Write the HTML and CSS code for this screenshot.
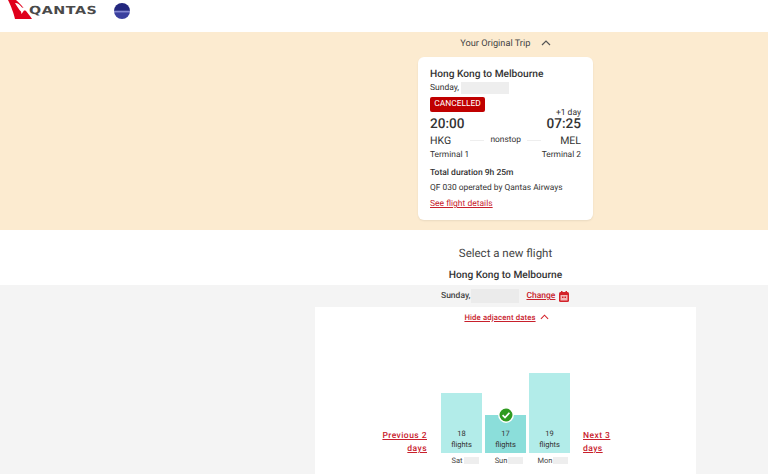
FILE: index.html
```html
<!DOCTYPE html>
<html lang="en">
<head>
    <meta charset="UTF-8">
    <meta name="viewport" content="width=device-width, initial-scale=1.0">
    <title>Select a new flight</title>
    <link rel="stylesheet" href="styles.css">
</head>
<body>
    <div class="header">
        <svg class="tail" width="24" height="19" viewBox="0 0 24 19">
            <path d="M0 0H8C12 3 20 13 24 19H7C6 14 3 6 0 0Z" fill="#e0001b"/>
            <path d="M7 3C10 3 12 5 14 7.5C16 7.5 18 8.5 20 10.5L16 10.5L13.5 14L13 11.5C11 10 9 6 7 3Z" fill="#fff"/>
        </svg>
        <span class="wordmark">QANTAS</span>
        <span class="globe"></span>
    </div>

    <div class="trip-band">
        <div class="trip-toggle">
            <span>Your Original Trip</span>
            <svg class="chevron" width="10" height="6" viewBox="0 0 10 6"><path d="M1 5L5 1L9 5" fill="none" stroke="#555" stroke-width="1.2"/></svg>
        </div>
        <div class="trip-card">
            <div class="route">Hong Kong to Melbourne</div>
            <div class="date-line">Sunday, <span class="mask mask-card"></span></div>
            <span class="status">CANCELLED</span>
            <div class="row times">
                <span>20:00</span>
                <span class="arrive"><small>+1 day</small>07:25</span>
            </div>
            <div class="row airports">
                <span>HKG</span>
                <span class="stops"><i></i><em>nonstop</em><i></i></span>
                <span>MEL</span>
            </div>
            <div class="row terminals">
                <span>Terminal 1</span>
                <span>Terminal 2</span>
            </div>
            <div class="duration">Total duration 9h 25m</div>
            <div class="operated">QF 030 operated by Qantas Airways</div>
            <a class="details" href="#">See flight details</a>
        </div>
    </div>

    <div class="select-head">
        <h2>Select a new flight</h2>
        <h3>Hong Kong to Melbourne</h3>
    </div>

    <div class="lower">
        <div class="date-strip">
            <span class="strip-date">Sunday,</span>
            <span class="mask mask-strip"></span>
            <a href="#">Change</a>
            <svg width="10" height="11" viewBox="0 0 10 11">
                <rect x="0" y="1" width="10" height="10" rx="1.5" fill="#d3222a"/>
                <rect x="2" y="0" width="1.5" height="2" fill="#d3222a"/>
                <rect x="6.5" y="0" width="1.5" height="2" fill="#d3222a"/>
                <rect x="1.5" y="4" width="7" height="5.5" fill="#f3b9b9"/>
                <rect x="3" y="5.5" width="1.5" height="1.5" fill="#d3222a"/>
                <rect x="5.5" y="5.5" width="1.5" height="1.5" fill="#d3222a"/>
            </svg>
        </div>
        <div class="panel">
            <div class="adjacent">
                <a href="#">Hide adjacent dates</a>
                <svg class="chevron" width="9" height="6" viewBox="0 0 10 6"><path d="M1 5L5 1L9 5" fill="none" stroke="#d3222a" stroke-width="1.2"/></svg>
            </div>
            <div class="chart">
                <a class="side prev" href="#">Previous 2 days</a>
                <div class="day">
                    <div class="bar bar-18">18<br>flights</div>
                    <div class="day-label">Sat <span class="mask mask-day"></span></div>
                </div>
                <div class="day">
                    <div class="bar bar-17">
                        <svg class="tick" width="16" height="16" viewBox="0 0 16 16">
                            <circle cx="8" cy="8" r="7.2" fill="#2f9a1f" stroke="#fff" stroke-width="1.4"/>
                            <path d="M4.6 8.2L7 10.6L11.4 5.8" fill="none" stroke="#fff" stroke-width="1.7"/>
                        </svg>
                        17<br>flights
                    </div>
                    <div class="day-label">Sun <span class="mask mask-day"></span></div>
                </div>
                <div class="day">
                    <div class="bar bar-19">19<br>flights</div>
                    <div class="day-label">Mon <span class="mask mask-day"></span></div>
                </div>
                <a class="side next" href="#">Next 3 days</a>
            </div>
        </div>
    </div>
</body>
</html>
```

FILE: styles.css
```css
html, body {
    margin: 0;
    height: 474px;
    overflow: hidden;
    font-family: Roboto, "Liberation Sans", sans-serif;
    text-rendering: geometricPrecision;
    color: #333;
    background: #fff;
}
a {
    color: #c8202c;
    text-decoration: underline;
}
.header {
    height: 32px;
    display: flex;
    align-items: flex-start;
    padding-left: 8px;
    box-sizing: border-box;
}
.wordmark {
    width: 67px;
    margin: 3px 0 0 -3px;
    font: bold 11px "DejaVu Sans", sans-serif;
    letter-spacing: 0.4px;
    line-height: 16px;
    color: #4a4a4a;
    transform: scaleX(1.3);
    transform-origin: left center;
}
.globe {
    width: 16px;
    height: 16px;
    margin: 3px 0 0 18px;
    border-radius: 50%;
    background: linear-gradient(#23277e 45%, #8d90d8 52%, #3a3f9e 64%);
}
.trip-band {
    height: 198px;
    background: #fcebd0;
    display: flex;
    flex-direction: column;
    align-items: center;
    padding-left: 243px;
    box-sizing: border-box;
}
.trip-toggle {
    height: 25px;
    font-size: 9.2px;
    line-height: 23px;
    color: #444;
}
.trip-toggle .chevron {
    margin-left: 8px;
}
.chevron {
    margin-left: 4px;
}
.trip-card {
    width: 175px;
    height: 163px;
    box-sizing: border-box;
    padding: 11px 12px 0;
    background: #fff;
    border-radius: 6px;
    box-shadow: 0 1px 2px rgba(0, 0, 0, 0.08);
}
.route {
    font-size: 10.2px;
    font-weight: 500;
    line-height: 13px;
}
.date-line {
    display: flex;
    align-items: center;
    height: 13px;
    font-size: 8.5px;
}
.mask {
    display: inline-block;
    background: #eeeeee;
}
.mask-card {
    width: 48px;
    height: 12px;
    margin-left: 2px;
}
.status {
    display: block;
    width: 55px;
    height: 15px;
    margin-top: 3px;
    border-radius: 2px;
    background: #c00000;
    color: #fff;
    font-size: 8.4px;
    line-height: 15px;
    text-align: center;
}
.row {
    display: flex;
    justify-content: space-between;
}
.times {
    align-items: flex-end;
    height: 20px;
    font-size: 13.6px;
    font-weight: 500;
    line-height: 15px;
}
.arrive {
    position: relative;
}
.arrive small {
    position: absolute;
    right: 0;
    top: -8px;
    font-size: 8.5px;
    font-weight: 400;
    line-height: 8px;
    white-space: nowrap;
}
.airports {
    align-items: center;
    height: 18px;
    margin-top: -1px;
    font-size: 10.5px;
}
.stops {
    display: flex;
    align-items: center;
    gap: 6px;
}
.stops em {
    font-style: normal;
    font-size: 8.4px;
}
.stops i {
    width: 14px;
    border-top: 1px solid #eee;
}
.terminals {
    height: 12px;
    font-size: 8.4px;
    line-height: 12px;
}
.duration {
    margin-top: 6px;
    font-size: 8.5px;
    font-weight: 500;
    line-height: 13px;
}
.operated {
    margin-top: 2px;
    font-size: 8.4px;
    line-height: 13px;
}
.details {
    display: block;
    margin-top: 3px;
    font-size: 8.5px;
    line-height: 13px;
}
.select-head {
    height: 55px;
    text-align: center;
    padding-left: 243px;
    box-sizing: border-box;
}
.select-head h2 {
    margin: 0;
    padding-top: 16px;
    font-size: 11.5px;
    font-weight: 400;
    line-height: 14px;
    color: #444;
}
.select-head h3 {
    margin: 9px 0 0;
    font-size: 10.2px;
    font-weight: 500;
    line-height: 14px;
}
.lower {
    height: 189px;
    background: #f4f4f4;
}
.date-strip {
    height: 22px;
    display: flex;
    align-items: center;
    padding-left: 441px;
    font-size: 8.5px;
    font-weight: 500;
}
.strip-date {
    color: #444;
}
.mask-strip {
    width: 48px;
    height: 14px;
    margin: 0 7px 0 1px;
    background: #ebebeb;
}
.date-strip svg {
    margin-left: 4px;
}
.panel {
    width: 381px;
    height: 167px;
    margin-left: 315px;
    background: #fff;
}
.adjacent {
    height: 20px;
    display: flex;
    align-items: center;
    justify-content: center;
    padding-left: 2px;
    font-size: 7.7px;
    font-weight: 500;
    letter-spacing: 0.15px;
}
.chart {
    display: flex;
    align-items: flex-end;
    justify-content: center;
    gap: 3px;
    height: 141px;
}
.day {
    width: 41px;
}
.bar {
    position: relative;
    box-sizing: border-box;
    background: #b2ece9;
    display: flex;
    flex-direction: column;
    justify-content: flex-end;
    text-align: center;
    font-size: 7.5px;
    line-height: 10.5px;
    padding-bottom: 3px;
    color: #333;
}
.bar-18 { height: 60px; }
.bar-17 { height: 38px; background: #8bdeda; }
.bar-19 { height: 80px; }
.tick {
    position: absolute;
    top: -8px;
    left: 12.5px;
}
.day-label {
    display: flex;
    align-items: center;
    justify-content: center;
    gap: 1px;
    height: 15px;
    padding-left: 7px;
    font-size: 7.5px;
    color: #444;
}
.mask-day {
    width: 15px;
    height: 7px;
    flex: none;
}
.side {
    width: 46px;
    margin-bottom: 12px;
    font-size: 8.5px;
    font-weight: 500;
    letter-spacing: 0.45px;
    line-height: 13px;
}
.prev {
    text-align: right;
    margin-right: 11px;
}
.next {
    width: 47px;
    margin-left: 10px;
}
```
